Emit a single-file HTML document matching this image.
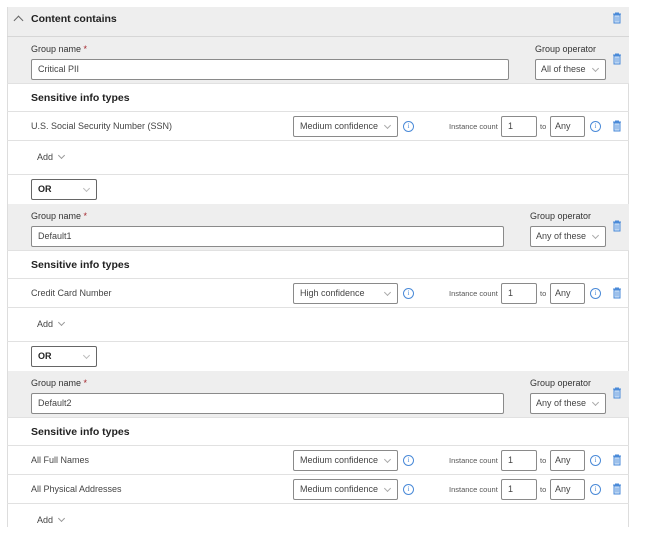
<!DOCTYPE html>
<html><head><meta charset="utf-8"><style>
*{box-sizing:border-box;margin:0;padding:0}
body{width:649px;height:548px;background:#fff;font-family:"Liberation Sans",sans-serif;color:#323130;position:relative;overflow:hidden}
.a{position:absolute}
.gray{background:#eeeeee}
.line{position:absolute;left:7px;width:622px;height:1px;background:#e1e1e1}
.b{font-weight:bold;font-size:10.5px;color:#222}
.t{font-size:9px;color:#444}
.box{position:absolute;border:1px solid #8a8a8a;background:#fff;border-radius:2px;font-size:9px;color:#444;padding-left:6px;line-height:19px;height:21px;white-space:nowrap;overflow:hidden}
.chev{position:absolute;right:7px;top:6px;width:5px;height:5px;border-right:1px solid #aaa;border-bottom:1px solid #aaa;transform:rotate(45deg)}
.info{position:absolute;width:11px;height:11px;border:1px solid #4a8ad8;border-radius:50%;font-size:7px;color:#4a8ad8;text-align:center;line-height:9px;font-family:"Liberation Serif",serif}
.sm{font-size:7.5px;color:#555}
</style></head><body>
<div class="a" style="left:7px;top:7px;width:622px;height:520px;border-left:1px solid #ddd;border-right:1px solid #ddd"></div>
<div class="a gray" style="left:8px;top:7px;width:621px;height:29px"></div>
<div class="line" style="top:36px;background:#d6d6d6"></div>
<div class="a" style="left:15px;top:17px;width:7px;height:7px;border-left:1px solid #666;border-top:1px solid #666;transform:rotate(45deg)"></div>
<div class="a b" style="left:31px;top:13px">Content contains</div>
<svg width="0" height="0" style="position:absolute"><defs><symbol id="tr" viewBox="0 0 10 12"><path d="M1 2h8M3.5 2V1h3v1M2 3h6v8H2z" fill="#d6e6f8" stroke="#4a8ad8" stroke-width="1"/><path d="M4 4.5v5M6 4.5v5" stroke="#4a8ad8" stroke-width=".8"/></symbol></defs></svg>
<svg class="a" style="left:612px;top:12px" width="10" height="12"><use href="#tr"/></svg>

<!-- group 1 -->
<div class="a gray" style="left:8px;top:37px;width:621px;height:46px"></div>
<div class="a t" style="left:31px;top:44px;color:#333;font-size:9px">Group name <span style="color:#a4262c">*</span></div>
<div class="box" style="left:31px;top:59px;width:478px">Critical PII</div>
<div class="a t" style="left:535px;top:44px;color:#333">Group operator</div>
<div class="box" style="left:535px;top:59px;width:71px;padding-left:5px">All of these<span class="chev"></span></div>
<svg class="a" style="left:612px;top:53px" width="10" height="12"><use href="#tr"/></svg>
<div class="line" style="top:83px"></div>
<div class="a b" style="left:31px;top:92px">Sensitive info types</div>
<div class="line" style="top:111px"></div>
<div class="a t" style="left:31px;top:121px">U.S. Social Security Number (SSN)</div>
<div class="box" style="left:293px;top:116px;width:105px">Medium confidence<span class="chev"></span></div>
<div class="info" style="left:403px;top:121px">i</div>
<div class="a sm" style="left:449px;top:122px">Instance count</div>
<div class="box" style="left:501px;top:116px;width:36px">1</div>
<div class="a sm" style="left:540px;top:122px">to</div>
<div class="box" style="left:550px;top:116px;width:35px;padding-left:4px">Any</div>
<div class="info" style="left:590px;top:121px">i</div>
<svg class="a" style="left:612px;top:120px" width="10" height="12"><use href="#tr"/></svg>
<div class="line" style="top:140px"></div>
<div class="a t" style="left:37px;top:152px">Add</div>
<div class="a" style="left:59px;top:153px;width:5px;height:5px;border-right:1px solid #999;border-bottom:1px solid #999;transform:rotate(45deg)"></div>
<div class="line" style="top:174px"></div>
<div class="box" style="left:31px;top:179px;width:66px;font-weight:bold;color:#222;border-color:#666">OR<span class="chev" style="border-color:#bbb"></span></div>

<!-- group 2 -->
<div class="a gray" style="left:8px;top:204px;width:621px;height:46px"></div>
<div class="a t" style="left:31px;top:211px;color:#333">Group name <span style="color:#a4262c">*</span></div>
<div class="box" style="left:31px;top:226px;width:473px">Default1</div>
<div class="a t" style="left:530px;top:211px;color:#333">Group operator</div>
<div class="box" style="left:530px;top:226px;width:76px;padding-left:5px">Any of these<span class="chev"></span></div>
<svg class="a" style="left:612px;top:220px" width="10" height="12"><use href="#tr"/></svg>
<div class="line" style="top:250px"></div>
<div class="a b" style="left:31px;top:259px">Sensitive info types</div>
<div class="line" style="top:278px"></div>
<div class="a t" style="left:31px;top:288px">Credit Card Number</div>
<div class="box" style="left:293px;top:283px;width:105px">High confidence<span class="chev"></span></div>
<div class="info" style="left:403px;top:288px">i</div>
<div class="a sm" style="left:449px;top:289px">Instance count</div>
<div class="box" style="left:501px;top:283px;width:36px">1</div>
<div class="a sm" style="left:540px;top:289px">to</div>
<div class="box" style="left:550px;top:283px;width:35px;padding-left:4px">Any</div>
<div class="info" style="left:590px;top:288px">i</div>
<svg class="a" style="left:612px;top:287px" width="10" height="12"><use href="#tr"/></svg>
<div class="line" style="top:307px"></div>
<div class="a t" style="left:37px;top:319px">Add</div>
<div class="a" style="left:59px;top:320px;width:5px;height:5px;border-right:1px solid #999;border-bottom:1px solid #999;transform:rotate(45deg)"></div>
<div class="line" style="top:341px"></div>
<div class="box" style="left:31px;top:346px;width:66px;font-weight:bold;color:#222;border-color:#666">OR<span class="chev" style="border-color:#bbb"></span></div>

<!-- group 3 -->
<div class="a gray" style="left:8px;top:371px;width:621px;height:46px"></div>
<div class="a t" style="left:31px;top:378px;color:#333">Group name <span style="color:#a4262c">*</span></div>
<div class="box" style="left:31px;top:393px;width:473px">Default2</div>
<div class="a t" style="left:530px;top:378px;color:#333">Group operator</div>
<div class="box" style="left:530px;top:393px;width:76px;padding-left:5px">Any of these<span class="chev"></span></div>
<svg class="a" style="left:612px;top:387px" width="10" height="12"><use href="#tr"/></svg>
<div class="line" style="top:417px"></div>
<div class="a b" style="left:31px;top:426px">Sensitive info types</div>
<div class="line" style="top:445px"></div>
<div class="a t" style="left:31px;top:455px">All Full Names</div>
<div class="box" style="left:293px;top:450px;width:105px">Medium confidence<span class="chev"></span></div>
<div class="info" style="left:403px;top:455px">i</div>
<div class="a sm" style="left:449px;top:456px">Instance count</div>
<div class="box" style="left:501px;top:450px;width:36px">1</div>
<div class="a sm" style="left:540px;top:456px">to</div>
<div class="box" style="left:550px;top:450px;width:35px;padding-left:4px">Any</div>
<div class="info" style="left:590px;top:455px">i</div>
<svg class="a" style="left:612px;top:454px" width="10" height="12"><use href="#tr"/></svg>
<div class="line" style="top:474px"></div>
<div class="a t" style="left:31px;top:484px">All Physical Addresses</div>
<div class="box" style="left:293px;top:479px;width:105px">Medium confidence<span class="chev"></span></div>
<div class="info" style="left:403px;top:484px">i</div>
<div class="a sm" style="left:449px;top:485px">Instance count</div>
<div class="box" style="left:501px;top:479px;width:36px">1</div>
<div class="a sm" style="left:540px;top:485px">to</div>
<div class="box" style="left:550px;top:479px;width:35px;padding-left:4px">Any</div>
<div class="info" style="left:590px;top:484px">i</div>
<svg class="a" style="left:612px;top:483px" width="10" height="12"><use href="#tr"/></svg>
<div class="line" style="top:503px"></div>
<div class="a t" style="left:37px;top:515px">Add</div>
<div class="a" style="left:59px;top:516px;width:5px;height:5px;border-right:1px solid #999;border-bottom:1px solid #999;transform:rotate(45deg)"></div>
</body></html>
